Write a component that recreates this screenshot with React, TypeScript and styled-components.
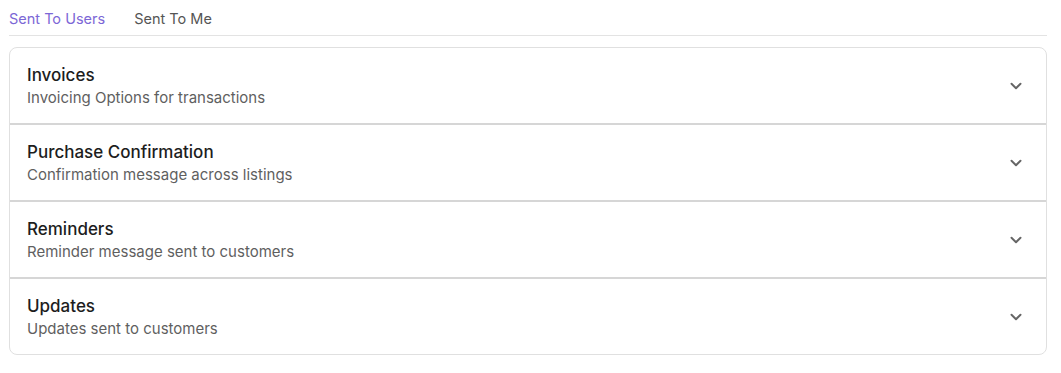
import React, { FC } from 'react'
import styled, { createGlobalStyle } from 'styled-components'

const GlobalStyle = createGlobalStyle`
    body {
        margin: 0px;
        background: #ffffff;
        font-family: Inter, "Noto Sans", sans-serif;
        color: #1f1f1f;
    }
`

const Page = styled.div`
    padding: 0 14px 0 9px;
`

const Tabs = styled.div`
    display: flex;
    gap: 29px;
    height: 36px;
    border-bottom: 1px solid #e3e3e3;
    box-sizing: border-box;
`

const Tab = styled.div<{ $active?: boolean }>`
    font-size: 14.5px;
    line-height: 38px;
    color: ${p => (p.$active ? '#7c67d6' : '#555555')};
    cursor: pointer;
`

const Card = styled.div`
    margin-top: 11px;
    border: 1px solid #e0e0e0;
    border-radius: 8px;
    overflow: hidden;
`

const Row = styled.div`
    display: flex;
    align-items: center;
    height: 75px;
    padding: 1px 21px 0 17px;
    box-sizing: border-box;
    & + & {
        border-top: 2px solid #d6d6d6;
        height: 77px;
    }
`

const Text = styled.div`
    flex: 1;
    display: flex;
    flex-direction: column;
    gap: 4px;
`

const Title = styled.div`
    font-size: 17px;
    font-weight: 500;
    color: #1d1d1d;
    line-height: 20px;
`

const Sub = styled.div`
    font-size: 15px;
    color: #5f5f5f;
    line-height: 18px;
`

const Chevron: FC = () => (
    <svg width="18" height="18" viewBox="0 0 24 24" fill="none" stroke="#666" strokeWidth="2.6" strokeLinecap="round" strokeLinejoin="round">
        <path d="M6 9l6 6 6-6" />
    </svg>
)

const items = [
    { title: 'Invoices', sub: 'Invoicing Options for transactions' },
    { title: 'Purchase Confirmation', sub: 'Confirmation message across listings' },
    { title: 'Reminders', sub: 'Reminder message sent to customers' },
    { title: 'Updates', sub: 'Updates sent to customers' },
]

const App: FC = () => {
    return (
        <Page>
            <GlobalStyle />
            <Tabs>
                <Tab $active>Sent To Users</Tab>
                <Tab>Sent To Me</Tab>
            </Tabs>
            <Card>
                {items.map(it => (
                    <Row key={it.title}>
                        <Text>
                            <Title>{it.title}</Title>
                            <Sub>{it.sub}</Sub>
                        </Text>
                        <Chevron />
                    </Row>
                ))}
            </Card>
        </Page>
    )
}

export default App
